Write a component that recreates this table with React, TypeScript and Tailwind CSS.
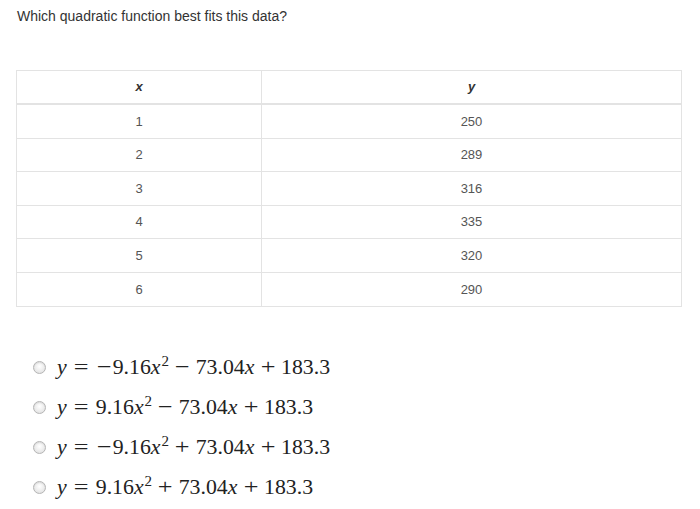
import React from 'react';

const rows = [
    ['1', '250'],
    ['2', '289'],
    ['3', '316'],
    ['4', '335'],
    ['5', '320'],
    ['6', '290'],
];

const options: { a: boolean; b: string }[] = [
    { a: true, b: '−' },
    { a: false, b: '−' },
    { a: true, b: '+' },
    { a: false, b: '+' },
];

// math-style operator with TeX-like spacing; glyph stretched a little toward MathJax width
const Op: React.FC<{ c: string; rel?: boolean; unary?: boolean }> = ({ c, rel, unary }) => (
    <span
        className={`inline-block w-[0.778em] text-center ${unary ? '' : rel ? 'mx-[0.278em]' : 'mx-[0.222em]'}`}
    >
        <span className="inline-block scale-x-[1.2]">{c}</span>
    </span>
);

const App: React.FC = () => {
    return (
        <div className="w-[700px] h-[509px] bg-white overflow-hidden font-['Liberation_Sans',Arial,sans-serif]">
            {/* Question */}
            <p className="pl-[17px] pt-[8px] text-[14px] leading-[17px] text-[#333]">
                Which quadratic function best fits this data?
            </p>

            {/* Data table */}
            <div className="ml-[16px] mt-[45px] w-[666px] border border-[#e3e3e3] text-[13px] text-[#555]">
                <div className="flex h-[34px] border-b-2 border-[#e3e3e3]">
                    <div className="w-[245px] flex items-center justify-center border-r border-[#e3e3e3] font-bold italic text-[#333]">x</div>
                    <div className="flex-1 flex items-center justify-center font-bold italic text-[#333]">y</div>
                </div>
                {rows.map(([x, y], i) => (
                    <div key={x} className={`flex h-[33.5px] ${i < rows.length - 1 ? 'border-b border-[#e3e3e3]' : ''}`}>
                        <div className="w-[245px] flex items-center justify-center border-r border-[#e3e3e3]">{x}</div>
                        <div className="flex-1 flex items-center justify-center">{y}</div>
                    </div>
                ))}
            </div>

            {/* Answer choices */}
            <div className="mt-[46px] pl-[33px] flex flex-col gap-[12px] font-['Liberation_Serif','Times_New_Roman',serif] text-[21.8px] leading-[28px] text-[#222]">
                {options.map((o, i) => (
                    <label key={i} className="flex items-center gap-[11px]">
                        <span className="w-[13px] h-[13px] rounded-full border border-[#b5b5b5] bg-[radial-gradient(circle_at_50%_40%,#fff,#dcdcdc)] shadow-[inset_0_1px_1px_rgba(0,0,0,0.08)] shrink-0" />
                        <span className="whitespace-nowrap">
                            <i>y</i>
                            <Op c="=" rel />
                            {o.a && <Op c="−" unary />}
                            9.16<i>x</i>
                            <sup className="text-[15px] relative -top-[8px] ml-[1px]">2</sup>
                            <Op c={o.b} />
                            73.04<i>x</i>
                            <Op c="+" />
                            183.3
                        </span>
                    </label>
                ))}
            </div>
        </div>
    );
};

export default App;
